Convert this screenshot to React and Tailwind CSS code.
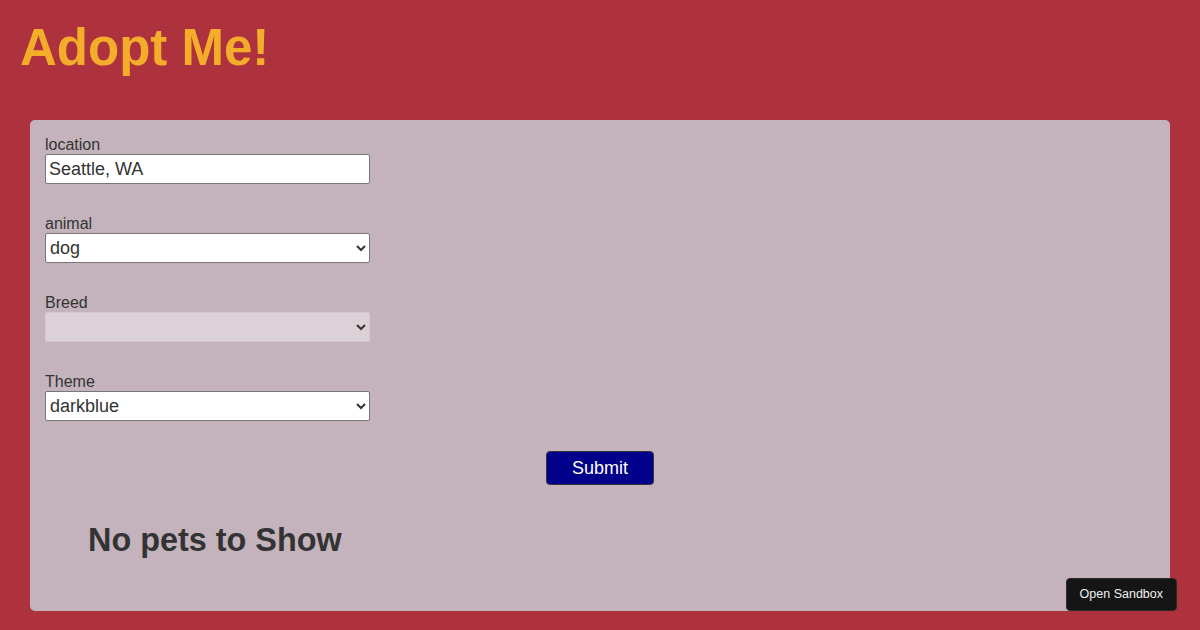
export default function App() {
  return (
    <div className="min-h-[630px] bg-[#ad323e] pb-[19px]" style={{ fontFamily: '"Liberation Sans", Arial, sans-serif' }}>
      <header className="px-5 pt-[18px] pb-[42px]">
        <h1 className="text-[51px] leading-[60px] font-bold text-[#f3ad2b]">Adopt Me!</h1>
      </header>
      <div className="mx-[30px] rounded-[5px] bg-[#c4b3bc] px-[15px] pt-[16px] pb-[51px] text-[#333]">
        <form className="flex flex-col">
          <label className="flex flex-col text-[16px] leading-[18px] mb-[31px]">
            <span>location</span>
            <input
              defaultValue="Seattle, WA"
              className="mt-0 w-[325px] h-[30px] bg-white border border-[#767676] rounded-[2px] px-[3px] text-[18px] text-[#333]"
            />
          </label>
          <label className="flex flex-col text-[16px] leading-[18px] mb-[31px]">
            <span>animal</span>
            <select defaultValue="dog" className="w-[325px] h-[30px] bg-white border border-[#767676] rounded-[2px] text-[18px] text-[#333]">
              <option value="dog">dog</option>
              <option value="cat">cat</option>
            </select>
          </label>
          <label className="flex flex-col text-[16px] leading-[18px] mb-[31px]">
            <span>Breed</span>
            <select disabled className="w-[325px] h-[30px] bg-[#dcd1d6] border border-[#d3c8ce] rounded-[2px] text-[18px] text-[#333]">
              <option></option>
            </select>
          </label>
          <label className="flex flex-col text-[16px] leading-[18px] mb-[30px]">
            <span>Theme</span>
            <select defaultValue="darkblue" className="w-[325px] h-[30px] bg-white border border-[#767676] rounded-[2px] text-[18px] text-[#333]">
              <option value="darkblue">darkblue</option>
            </select>
          </label>
          <div className="flex justify-center">
            <button type="button" className="w-[108px] h-[34px] bg-[#00008b] border border-[#333] rounded-[4px] text-white text-[18px]">
              Submit
            </button>
          </div>
        </form>
        <h2 className="mt-[35px] pl-[43px] text-[32.4px] leading-[40px] font-bold text-[#333]">No pets to Show</h2>
      </div>
      <div
        className="fixed right-[23px] bottom-[19px] h-[33px] px-[13px] flex items-center rounded-[4px] bg-[#151515] border border-[#2a2a2a] text-[12.5px] font-light text-[#f0f0f0]"
        style={{ fontFamily: '"Liberation Sans", Arial, sans-serif' }}
      >
        Open Sandbox
      </div>
    </div>
  );
}
